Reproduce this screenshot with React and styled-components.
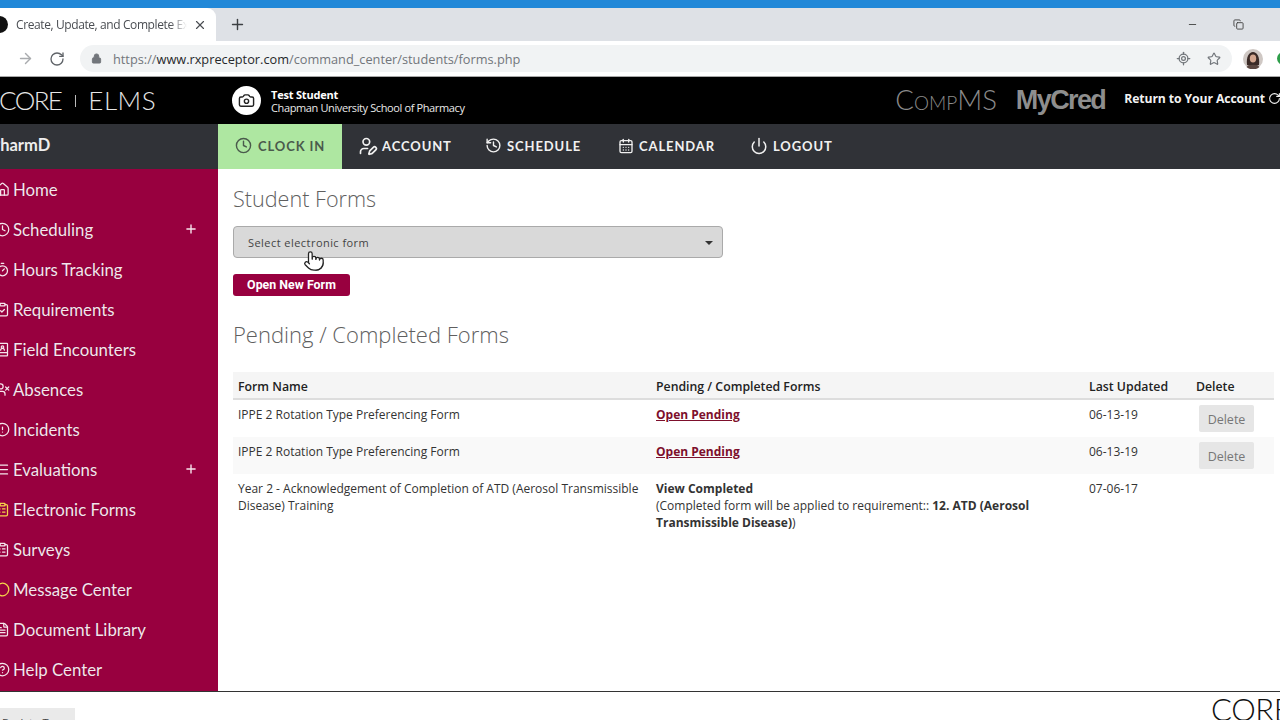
import React from 'react'
import styled, { createGlobalStyle } from 'styled-components'
import {
    ArrowLeft,
    ArrowRight,
    RotateCw,
    Lock,
    Star,
    Plus,
    X,
    Minus,
    Copy,
    LocateFixed,
    Camera,
    Clock,
    UserPen,
    History,
    CalendarDays,
    Power,
    Home,
    ClipboardCheck,
    ClipboardList,
    BookUser,
    UserX,
    CircleAlert,
    Menu,
    FileText,
    MessageCircle,
    CircleHelp,
    Timer,
    Pointer,
} from 'lucide-react'

const GlobalStyle = createGlobalStyle`
    html, body {
        margin: 0;
        padding: 0;
        background: #fff;
    }
    body {
        font-family: "Open Sans", "Liberation Sans", sans-serif;
    }
`

const Page = styled.div`
    position: relative;
    width: 1280px;
    height: 720px;
    overflow: hidden;
    display: flex;
    flex-direction: column;
`

const TitleLine = styled.div`
    height: 8px;
    background: #2188d8;
`

const TabStrip = styled.div`
    height: 33px;
    background: #dee1e6;
    display: flex;
    align-items: center;
    color: #3c4043;
`

const Tab = styled.div`
    width: 216px;
    height: 33px;
    box-sizing: border-box;
    background: #fff;
    border-radius: 0 9px 0 0;
    display: flex;
    align-items: center;
    font-size: 12px;
    letter-spacing: -0.4px;
    color: #4a4d52;
`

const Favicon = styled.span`
    width: 17px;
    height: 17px;
    margin-left: -9px;
    margin-right: 8px;
    border-radius: 50%;
    background: #111;
    flex: none;
`

const TabTitle = styled.span`
    width: 171px;
    white-space: nowrap;
    overflow: hidden;
    flex: none;
    margin-right: 6px;
    -webkit-mask-image: linear-gradient(90deg, #000 90%, transparent);
    mask-image: linear-gradient(90deg, #000 90%, transparent);
`

const NewTab = styled.span`
    display: flex;
    margin-left: 13px;
`

const WindowButtons = styled.div`
    margin-left: auto;
    display: flex;
    align-items: center;
    gap: 35px;
    margin-right: -10px;
    color: #444;
`

const Toolbar = styled.div`
    height: 36px;
    box-sizing: border-box;
    background: #fff;
    border-bottom: 1px solid #a8a8a8;
    display: flex;
    align-items: center;
    color: #5f6368;
`

const NavArrows = styled.div`
    width: 95px;
    flex: none;
    display: flex;
    align-items: center;
    gap: 15px;
    margin-left: -15px;
`

const Address = styled.div`
    width: 1152px;
    height: 27px;
    flex: none;
    box-sizing: border-box;
    background: #f1f3f4;
    border-radius: 14px;
    padding: 0 0 0 11px;
    display: flex;
    align-items: center;
    font-size: 12.75px;
    color: #72767b;
`

const Url = styled.span`
    margin-left: 11px;
    b {
        font-weight: 400;
        color: #26282b;
    }
`

const AddressIcons = styled.div`
    margin-left: auto;
    display: flex;
    align-items: center;
    gap: 16px;
    margin-right: 11px;
`

const Profile = styled.svg`
    flex: none;
    margin-left: 11px;
`

const GreenDot = styled.span`
    position: absolute;
    left: 1277px;
    top: 52px;
    width: 13px;
    height: 13px;
    border-radius: 50%;
    background: #2e9e4a;
`

const BlackHeader = styled.header`
    height: 47px;
    background: #000;
    display: flex;
    align-items: center;
    color: #fff;
`

const CoreLogo = styled.div`
    width: 233px;
    flex: none;
    box-sizing: border-box;
    padding-bottom: 2px;
    font-family: "Lato", sans-serif;
    font-weight: 300;
    font-size: 26px;
    color: #e6e6e6;
    white-space: nowrap;
    display: flex;
    align-items: center;
    margin-left: -1px;
`

const CoreWord = styled.span`
    letter-spacing: ${(p) => p.$spacing}px;
`

const LogoBar = styled.span`
    width: 1px;
    height: 12px;
    background: #bbb;
    margin: 3px 12px 0 14px;
`

const UserBadge = styled.div`
    width: 29px;
    height: 29px;
    border-radius: 50%;
    background: #fff;
    color: #222;
    display: flex;
    align-items: center;
    justify-content: center;
    flex: none;
`

const UserText = styled.div`
    margin-left: 10px;
    font-size: 11px;
    line-height: 13px;
    letter-spacing: -0.38px;
    color: #e9e9e9;
    b {
        display: block;
        font-weight: 700;
        letter-spacing: -0.2px;
        color: #fff;
    }
`

const HeaderRight = styled.div`
    margin-left: auto;
    display: flex;
    align-items: center;
    white-space: nowrap;
`

const CompMs = styled.span`
    font-family: "Lato", sans-serif;
    font-weight: 300;
    font-size: 27.5px;
    color: #8b8b8b;
    font-variant: small-caps;
    margin-right: 19px;
    padding-bottom: 2px;
`

const MyCred = styled.span`
    font-family: "Liberation Sans", sans-serif;
    font-weight: 700;
    font-size: 27px;
    letter-spacing: -1.6px;
    color: #8e8e8e;
    margin-right: 19px;
`

const ReturnLink = styled.span`
    font-size: 12.2px;
    font-weight: 700;
    letter-spacing: -0.1px;
    color: #f2f2f2;
    display: flex;
    align-items: center;
    margin-right: -1px;
    gap: 3px;
    padding-bottom: 4px;
`

const NavBar = styled.nav`
    height: 45px;
    background: #303237;
    display: flex;
    align-items: stretch;
`

const Brand = styled.div`
    width: 218px;
    flex: none;
    box-sizing: border-box;
    padding-bottom: 3px;
    display: flex;
    align-items: center;
    font-family: "Lato", sans-serif;
    font-weight: 700;
    font-size: 16.5px;
    color: #eee;
    text-indent: -10px;
`

const NavItem = styled.a`
    display: flex;
    align-items: center;
    gap: ${(p) => p.$gap}px;
    width: ${(p) => p.$width}px;
    box-sizing: border-box;
    padding: 0 0 2px ${(p) => p.$left}px;
    background: ${(p) => (p.$active ? '#aee7a1' : 'transparent')};
    color: ${(p) => (p.$active ? '#4a5a4c' : '#f1f1f1')};
    font-family: "Lato", sans-serif;
    font-weight: 700;
    font-size: 13px;
    letter-spacing: 0.9px;
    white-space: nowrap;
`

const Body = styled.div`
    height: 522px;
    display: flex;
    border-bottom: 1px solid #333;
    background: #fff;
`

const Sidebar = styled.aside`
    width: 218px;
    flex: none;
    background: #98003f;
    display: flex;
    flex-direction: column;
`

const SideItem = styled.a`
    height: 40.05px;
    flex: none;
    display: flex;
    align-items: center;
    color: #f6e4ec;
    font-family: "Lato", sans-serif;
    font-size: 16.8px;
    white-space: nowrap;
    text-shadow: 0 0 1px rgba(60, 0, 30, 0.6);
`

const SideIcon = styled.span`
    width: 16px;
    flex: none;
    margin-left: -6px;
    margin-right: 3px;
    display: flex;
    justify-content: center;
    color: ${(p) => (p.$yellow ? '#f5d34a' : '#f4e6ec')};
`

const Expand = styled.span`
    margin-left: auto;
    margin-right: 20px;
    display: flex;
    color: #f6e4ec;
`

const Main = styled.main`
    flex: 1;
    box-sizing: border-box;
    padding: 15px 6px 0 15px;
    min-width: 0;
`

const Heading = styled.h2`
    margin: 0;
    font-weight: 300;
    font-size: ${(p) => p.$size || 22}px;
    line-height: 30px;
    color: #5f5f5f;
`

const SelectBox = styled.div`
    width: 490px;
    height: 32px;
    box-sizing: border-box;
    margin-top: 12px;
    padding: 1px 9px 0 14px;
    background: #d9d9d9;
    border: 1px solid #aaa;
    border-radius: 4px;
    display: flex;
    align-items: center;
    justify-content: space-between;
    font-size: 11px;
    letter-spacing: 0.45px;
    color: #444;
`

const Caret = styled.span`
    width: 0;
    height: 0;
    border-left: 4px solid transparent;
    border-right: 4px solid transparent;
    border-top: 4px solid #333;
`

const OpenButton = styled.button`
    display: block;
    width: 117px;
    height: 22px;
    margin-top: 16px;
    padding: 0 0 2px;
    background: #98003f;
    border: 0;
    border-radius: 3px;
    color: #fff;
    font-family: "Roboto", sans-serif;
    font-weight: 700;
    font-size: 12.4px;
`

const PendingHeading = styled(Heading)`
    margin-top: 23px;
`

const FormsTable = styled.table`
    width: 1041px;
    margin-top: 23px;
    border-collapse: collapse;
    table-layout: fixed;
    font-size: 12px;
    line-height: 17px;
    color: #333;
`

const HeadCell = styled.th`
    height: 27px;
    box-sizing: border-box;
    padding: 2px 5px 0;
    text-align: left;
    font-weight: 600;
    font-size: 12.3px;
    color: #222;
    background: #f5f5f5;
    border-bottom: 2px solid #ddd;
`

const Row = styled.tr`
    background: ${(p) => (p.$shade ? '#f9f9f9' : '#fff')};
`

const Cell = styled.td`
    height: 37.5px;
    box-sizing: border-box;
    padding: 6px 5px 4px;
    vertical-align: top;
`

const PendingLink = styled.a`
    font-weight: 700;
    color: #7d0f2c;
    text-decoration: underline;
`

const DeleteButton = styled.span`
    display: block;
    width: 55px;
    height: 27px;
    margin: -1px 0 -3px 3px;
    background: #e6e6e6;
    border-radius: 2px;
    color: #777;
    font-size: 12.5px;
    line-height: 29px;
    text-align: center;
`

const FooterRow = styled.footer`
    flex: 1;
    display: flex;
    align-items: flex-end;
    justify-content: space-between;
`

const BackTop = styled.span`
    width: 75px;
    height: 12px;
    background: #eaeaea;
    font-size: 11px;
    line-height: 14px;
    padding: 8px 0 0 2px;
    box-sizing: border-box;
    overflow: hidden;
    white-space: nowrap;
    color: #444;
`

const FooterLogo = styled.span`
    width: 69px;
    height: 28px;
    box-sizing: border-box;
    padding-top: 2px;
    overflow: hidden;
    font-family: "Lato", sans-serif;
    font-weight: 300;
    font-size: 31px;
    letter-spacing: -0.4px;
    line-height: 30px;
    color: #111;
    white-space: nowrap;
`

const Cursor = styled.span`
    position: absolute;
    left: 303px;
    top: 250px;
    display: flex;
    color: #222;
`

const sideLinks = [
    { label: 'Home', Icon: Home },
    { label: 'Scheduling', Icon: Clock, more: true },
    { label: 'Hours Tracking', Icon: Timer },
    { label: 'Requirements', Icon: ClipboardCheck },
    { label: 'Field Encounters', Icon: BookUser },
    { label: 'Absences', Icon: UserX },
    { label: 'Incidents', Icon: CircleAlert },
    { label: 'Evaluations', Icon: Menu, more: true },
    { label: 'Electronic Forms', Icon: ClipboardList, yellow: true },
    { label: 'Surveys', Icon: ClipboardList },
    { label: 'Message Center', Icon: MessageCircle, yellow: true },
    { label: 'Document Library', Icon: FileText },
    { label: 'Help Center', Icon: CircleHelp },
]

const navLinks = [
    { label: 'ACCOUNT', Icon: UserPen, width: 127, left: 16, size: 20, gap: 4 },
    { label: 'SCHEDULE', Icon: History, width: 133, left: 16, size: 17, gap: 5 },
    { label: 'CALENDAR', Icon: CalendarDays, width: 133, left: 16, size: 16, gap: 5 },
    { label: 'LOGOUT', Icon: Power, width: 110, left: 15, size: 18, gap: 5 },
]

const App = () => (
    <Page>
        <GlobalStyle />
        <TitleLine />
        <TabStrip>
            <Tab>
                <Favicon />
                <TabTitle>Create, Update, and Complete Ex</TabTitle>
                <X size={14} />
            </Tab>
            <NewTab>
                <Plus size={17} />
            </NewTab>
            <WindowButtons>
                <Minus size={11} />
                <Copy size={11} />
                <X size={11} />
            </WindowButtons>
        </TabStrip>
        <Toolbar>
            <NavArrows>
                <ArrowLeft size={17} />
                <ArrowRight size={17} color="#a9abae" />
                <RotateCw size={16} />
            </NavArrows>
            <Address>
                <Lock size={11} fill="currentColor" />
                <Url>
                    https://<b>www.rxpreceptor.com</b>/command_center/students/forms.php
                </Url>
                <AddressIcons>
                    <LocateFixed size={15} />
                    <Star size={14} />
                </AddressIcons>
            </Address>
            <Profile width="20" height="20" viewBox="0 0 20 20">
                <circle cx="10" cy="10" r="10" fill="#cfc8c4" />
                <path d="M4 16c-1-8 2-13 6-13s7 5 6 13l-3 1H7z" fill="#3a2a26" />
                <ellipse cx="10" cy="9.5" rx="3.2" ry="4" fill="#d3a68f" />
                <path d="M3.5 18c2-3 11-3 13 0a10 10 0 0 1-13 0z" fill="#5a4640" />
            </Profile>
        </Toolbar>
        <GreenDot />
        <BlackHeader>
            <CoreLogo>
                <CoreWord $spacing={-1.6}>CORE</CoreWord>
                <LogoBar />
                <CoreWord $spacing={0.5}>ELMS</CoreWord>
            </CoreLogo>
            <UserBadge>
                <Camera size={17} />
            </UserBadge>
            <UserText>
                <b>Test Student</b>
                Chapman University School of Pharmacy
            </UserText>
            <HeaderRight>
                <CompMs>CompMS</CompMs>
                <MyCred>MyCred</MyCred>
                <ReturnLink>
                    Return to Your Account
                    <RotateCw size={13} />
                </ReturnLink>
            </HeaderRight>
        </BlackHeader>
        <NavBar>
            <Brand>PharmD</Brand>
            <NavItem $active $width={124} $left={17} $gap={6}>
                <Clock size={17} />
                CLOCK IN
            </NavItem>
            {navLinks.map(({ label, Icon, width, left, size, gap }) => (
                <NavItem key={label} $width={width} $left={left} $gap={gap}>
                    <Icon size={size} />
                    {label}
                </NavItem>
            ))}
        </NavBar>
        <Body>
            <Sidebar>
                {sideLinks.map(({ label, Icon, more, yellow }) => (
                    <SideItem key={label}>
                        <SideIcon $yellow={yellow}>
                            <Icon size={15} />
                        </SideIcon>
                        {label}
                        {more && (
                            <Expand>
                                <Plus size={14} strokeWidth={2.4} />
                            </Expand>
                        )}
                    </SideItem>
                ))}
            </Sidebar>
            <Main>
                <Heading $size={21.6}>Student Forms</Heading>
                <SelectBox>
                    Select electronic form
                    <Caret />
                </SelectBox>
                <OpenButton>Open New Form</OpenButton>
                <PendingHeading>Pending / Completed Forms</PendingHeading>
                <FormsTable>
                    <colgroup>
                        <col width="418" />
                        <col width="433" />
                        <col width="107" />
                        <col width="83" />
                    </colgroup>
                    <thead>
                        <tr>
                            <HeadCell>Form Name</HeadCell>
                            <HeadCell>Pending / Completed Forms</HeadCell>
                            <HeadCell>Last Updated</HeadCell>
                            <HeadCell>Delete</HeadCell>
                        </tr>
                    </thead>
                    <tbody>
                        <Row>
                            <Cell>IPPE 2 Rotation Type Preferencing Form</Cell>
                            <Cell>
                                <PendingLink>Open Pending</PendingLink>
                            </Cell>
                            <Cell>06-13-19</Cell>
                            <Cell>
                                <DeleteButton>Delete</DeleteButton>
                            </Cell>
                        </Row>
                        <Row $shade>
                            <Cell>IPPE 2 Rotation Type Preferencing Form</Cell>
                            <Cell>
                                <PendingLink>Open Pending</PendingLink>
                            </Cell>
                            <Cell>06-13-19</Cell>
                            <Cell>
                                <DeleteButton>Delete</DeleteButton>
                            </Cell>
                        </Row>
                        <Row>
                            <Cell>
                                Year 2 - Acknowledgement of Completion of ATD (Aerosol Transmissible
                                Disease) Training
                            </Cell>
                            <Cell>
                                <b>View Completed</b>
                                <br />
                                (Completed form will be applied to requirement:: <b>12. ATD (Aerosol Transmissible Disease)</b>)
                            </Cell>
                            <Cell>07-06-17</Cell>
                            <Cell />
                        </Row>
                    </tbody>
                </FormsTable>
            </Main>
        </Body>
        <FooterRow>
            <BackTop>Back to Top</BackTop>
            <FooterLogo>CORE</FooterLogo>
        </FooterRow>
        <Cursor>
            <Pointer size={22} fill="#fff" strokeWidth={1.4} />
        </Cursor>
    </Page>
)

export default App
